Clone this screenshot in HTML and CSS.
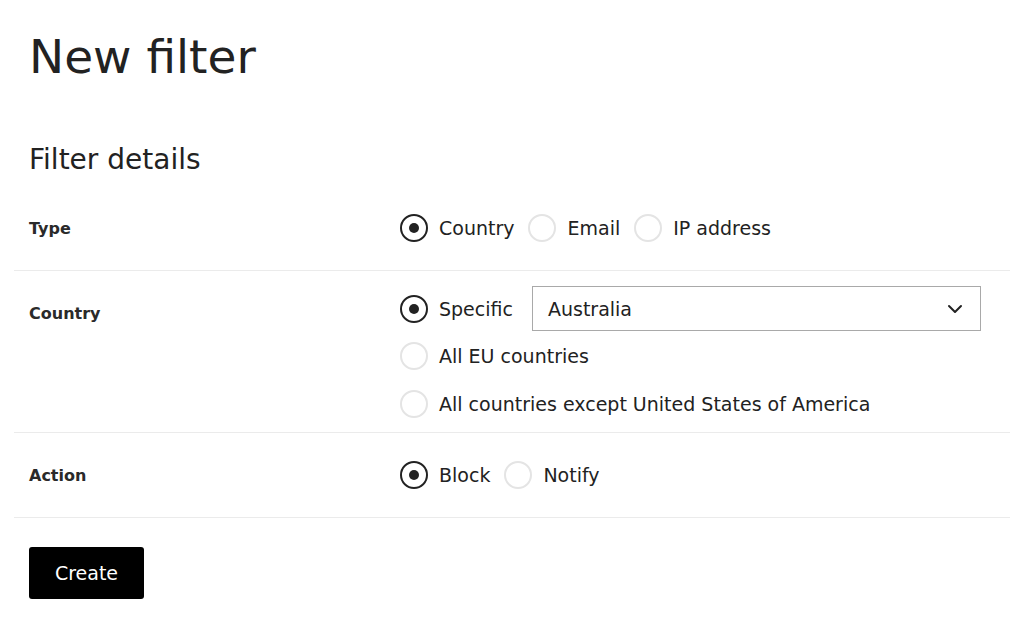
FILE: index.html
```html
<!DOCTYPE html>
<html lang="en">
<head>
<meta charset="utf-8">
<title>New filter</title>
<link rel="stylesheet" href="styles.css">
</head>
<body>
<main class="page">
  <h1 class="title">New filter</h1>
  <h2 class="subtitle">Filter details</h2>
  <div class="form">
    <div class="row">
      <div class="label">Type</div>
      <div class="controls controls-inline">
        <label class="option"><span class="radio checked"></span><span class="opt-text">Country</span></label>
        <label class="option"><span class="radio"></span><span class="opt-text">Email</span></label>
        <label class="option"><span class="radio"></span><span class="opt-text">IP address</span></label>
      </div>
    </div>
    <div class="row">
      <div class="label">Country</div>
      <div class="controls controls-stack">
        <div class="option">
          <span class="radio checked"></span><span class="opt-text">Specific</span>
          <div class="select">
            <span class="select-value">Australia</span>
            <svg class="chevron" width="16" height="10" viewBox="0 0 16 10"><path d="M2 2 L8 8 L14 2" fill="none" stroke="#222" stroke-width="2" stroke-linecap="round" stroke-linejoin="round"/></svg>
          </div>
        </div>
        <label class="option"><span class="radio"></span><span class="opt-text">All EU countries</span></label>
        <label class="option"><span class="radio"></span><span class="opt-text">All countries except United States of America</span></label>
      </div>
    </div>
    <div class="row">
      <div class="label">Action</div>
      <div class="controls controls-inline">
        <label class="option"><span class="radio checked"></span><span class="opt-text">Block</span></label>
        <label class="option"><span class="radio"></span><span class="opt-text">Notify</span></label>
      </div>
    </div>
  </div>
  <div class="actions">
    <button class="btn" type="button">Create</button>
  </div>
</main>
</body>
</html>
```

FILE: styles.css
```css
html, body {
  margin: 0;
  padding: 0;
  background: #ffffff;
}
body {
  font-family: "DejaVu Sans", "Liberation Sans", sans-serif;
  color: #222222;
}
.page {
  padding: 29px 0 0 0;
}
.title {
  margin: 0 0 0 29px;
  font-size: 47px;
  line-height: 56px;
  font-weight: 400;
  letter-spacing: 0;
}
.subtitle {
  margin: 58px 0 0 29px;
  font-size: 28px;
  line-height: 34px;
  font-weight: 400;
}
.form {
  margin: 9px 0 0 14px;
}
.row {
  display: flex;
  border-bottom: 1px solid #ebebeb;
}
.label {
  width: 371px;
  flex: none;
  padding: 33px 0 0 15px;
  font-size: 16px;
  line-height: 20px;
  font-weight: 700;
  color: #2a2a2a;
}
.controls {
  flex: 1;
  padding: 19.5px 29px 19.5px 0;
}
.controls-inline {
  display: flex;
  align-items: center;
}
.controls-stack {
  display: flex;
  flex-direction: column;
  gap: 2.5px;
  padding-top: 15px;
  padding-bottom: 6px;
}
.option {
  display: flex;
  align-items: center;
  height: 45px;
  margin-right: 14px;
  font-size: 19px;
}
.controls-stack .option {
  margin-right: 0;
}
.radio {
  box-sizing: border-box;
  width: 28px;
  height: 28px;
  border-radius: 50%;
  border: 2px solid #e4e4e4;
  display: flex;
  align-items: center;
  justify-content: center;
  flex: none;
  background: #fff;
}
.radio.checked {
  border-color: #222;
}
.radio.checked::after {
  content: "";
  width: 10px;
  height: 10px;
  border-radius: 50%;
  background: #222;
}
.opt-text {
  margin-left: 11px;
  white-space: nowrap;
}
.select {
  box-sizing: border-box;
  flex: 1;
  height: 45px;
  margin-left: 19px;
  border: 1px solid #a9a9a9;
  display: flex;
  align-items: center;
  justify-content: space-between;
  padding: 0 17px 0 15px;
  font-size: 19px;
}
.chevron {
  display: block;
}
.actions {
  padding: 29px 0 0 29px;
}
.btn {
  font-family: "DejaVu Sans", "Liberation Sans", sans-serif;
  font-size: 19px;
  color: #fff;
  background: #000;
  border: 0;
  border-radius: 3px;
  height: 52px;
  padding: 0 24px;
  min-width: 115px;
  cursor: pointer;
}
```
